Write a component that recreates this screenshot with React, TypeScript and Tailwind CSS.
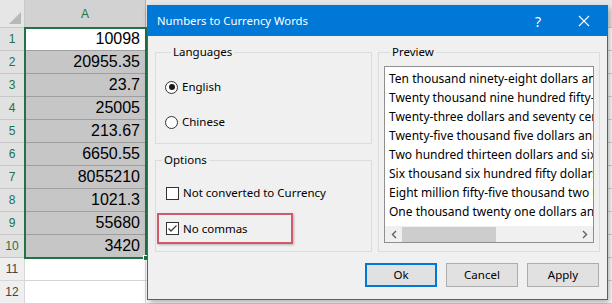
import React from 'react';

const values = ['10098', '20955.35', '23.7', '25005', '213.67', '6650.55', '8055210', '1021.3', '55680', '3420'];

const previewLines = [
  'Ten thousand ninety-eight dollars and',
  'Twenty thousand nine hundred fifty-five',
  'Twenty-three dollars and seventy cents',
  'Twenty-five thousand five dollars and',
  'Two hundred thirteen dollars and sixty',
  'Six thousand six hundred fifty dollars and',
  'Eight million fifty-five thousand two hundred',
  'One thousand twenty one dollars and',
];

function Radio({ checked, label }: { checked?: boolean; label: string }) {
  return (
    <div className="flex items-center gap-[4px] h-[16px]">
      <span className="w-[13px] h-[13px] rounded-full border border-[#333333] bg-white flex items-center justify-center">
        {checked && <span className="w-[6px] h-[6px] rounded-full bg-[#1a1a1a]" />}
      </span>
      <span>{label}</span>
    </div>
  );
}

function Check({ checked, label }: { checked?: boolean; label: string }) {
  return (
    <div className="flex items-center gap-[4px] h-[16px] whitespace-nowrap">
      <span className="w-[13px] h-[13px] shrink-0 border border-[#333333] bg-white flex items-center justify-center">
        {checked && (
          <svg width="11" height="11" viewBox="0 0 11 11">
            <polyline points="1.5,5.5 4,8 9.5,2.5" fill="none" stroke="#3c3c3c" strokeWidth="1.3" />
          </svg>
        )}
      </span>
      <span>{label}</span>
    </div>
  );
}

export default function App() {
  return (
    <div className="relative w-[612px] h-[304px] overflow-hidden bg-white font-['Liberation_Sans',sans-serif]">
      {/* Spreadsheet */}
      <div className="flex flex-col">
        <div className="flex h-[28px]">
          <div className="relative w-[25px] bg-[#e6e6e6] border-r border-b border-[#c8c8c8]">
            <svg className="absolute right-[3px] bottom-[3px]" width="12" height="12" viewBox="0 0 12 12">
              <polygon points="12,0 12,12 0,12" fill="#b8b8b8" />
            </svg>
          </div>
          <div className="w-[121px] bg-[#d2d2d2] border-r border-[#b0b0b0] flex items-center justify-center text-[12px] text-[#217346]">
            A
          </div>
          <div className="flex-1 bg-[#e6e6e6] border-b border-[#c8c8c8]" />
        </div>
        {Array.from({ length: 12 }).map((_, i) => {
          const sel = i < 10;
          return (
            <div key={i} className="flex h-[23px]">
              <div
                className={`w-[25px] border-r border-b flex items-center justify-center text-[12px] ${
                  sel ? 'bg-[#e1e1e1] border-[#c8c8c8] text-[#217346]' : 'bg-[#efefef] border-[#d8d8d8] text-[#444444]'
                }`}
              >
                {i + 1}
              </div>
              <div
                className={`w-[121px] border-b border-r flex items-center justify-end pr-[5px] text-[16px] text-black ${
                  i === 0 ? 'bg-white border-[#a0a0a0]' : sel ? 'bg-[#c6c6c6] border-[#9e9e9e]' : 'bg-white border-[#d4d4d4]'
                }`}
              >
                {sel ? values[i] : ''}
              </div>
              <div className="flex-1 border-b border-[#d4d4d4]" />
            </div>
          );
        })}
      </div>

      {/* Selection outline */}
      <div className="absolute left-[24px] top-[27px] w-[123px] h-[232px] border-2 border-[#217346]" />
      <div className="absolute left-[143px] top-[255px] w-[6px] h-[6px] bg-[#217346] border border-white" />

      {/* Dialog */}
      <div className="absolute left-[147px] top-[5px] w-[461px] h-[295px] border border-[#0078d7] bg-[#f0f0f0] shadow-[2px_3px_6px_rgba(0,0,0,0.3)] flex flex-col font-['Noto_Sans',sans-serif] text-[11.5px] text-black">
        <div className="h-[30px] shrink-0 bg-[#0078d7] flex items-center pl-[9px] text-white text-[11.3px]">
          <span className="flex-1">Numbers to Currency Words</span>
          <span className="w-[46px] text-center text-[14px]">?</span>
          <span className="w-[46px] flex justify-center">
            <svg width="12" height="12" viewBox="0 0 12 12">
              <path d="M1 1L11 11M11 1L1 11" stroke="white" strokeWidth="1.2" />
            </svg>
          </span>
        </div>

        <div className="flex gap-[6px] pt-[8px] pl-[7px] pr-[6px]">
          <div className="w-[217px] shrink-0 flex flex-col gap-[8px]">
            <fieldset className="min-w-0 h-[100px] border border-[#dcdcdc] pl-[9px]">
              <legend className="ml-[6px] px-[2px] leading-[16px]">Languages</legend>
              <div className="flex flex-col gap-[19px] pt-[19px]">
                <Radio checked label="English" />
                <Radio label="Chinese" />
              </div>
            </fieldset>
            <fieldset className="min-w-0 h-[100px] border border-[#dcdcdc]">
              <legend className="ml-[6px] px-[2px] leading-[16px]">Options</legend>
              <div className="flex flex-col pt-[17px]">
                <div className="pl-[10px]">
                  <Check label="Not converted to Currency" />
                </div>
                <div className="mt-[12px] ml-[1px] w-[136px] h-[31px] border-2 border-[#d0596a] shadow-[1px_1px_2px_rgba(0,0,0,0.25)] pl-[7px] flex items-center">
                  <Check checked label="No commas" />
                </div>
              </div>
            </fieldset>
          </div>

          <fieldset className="min-w-0 w-[222px] shrink-0 h-[208px] border border-[#dcdcdc] px-[5px]">
            <legend className="ml-[6px] px-[2px] leading-[16px]">Preview</legend>
            <div className="mt-[6px] h-[177px] border border-[#8f8f8f] bg-white flex flex-col">
              <div className="flex-1 overflow-hidden pt-[2px] pl-[4px] text-[12px]">
                {previewLines.map((l) => (
                  <div key={l} className="h-[19px] leading-[19px] whitespace-nowrap">
                    {l}
                  </div>
                ))}
              </div>
              <div className="h-[16px] bg-[#f0f0f0] flex items-center">
                <span className="w-[17px] flex justify-center">
                  <svg width="6" height="9" viewBox="0 0 6 9">
                    <path d="M5 1L1.5 4.5L5 8" fill="none" stroke="#606060" strokeWidth="1.4" />
                  </svg>
                </span>
                <div className="w-[94px] h-[15px] bg-[#cdcdcd]" />
                <div className="flex-1" />
                <span className="w-[17px] flex justify-center">
                  <svg width="6" height="9" viewBox="0 0 6 9">
                    <path d="M1 1L4.5 4.5L1 8" fill="none" stroke="#606060" strokeWidth="1.4" />
                  </svg>
                </span>
              </div>
            </div>
          </fieldset>
        </div>

        <div className="flex justify-end gap-[9px] pr-[8px] pt-[11px]">
          <button className="w-[72px] h-[24px] border-2 border-[#0078d7] bg-[#e1e1e1]">Ok</button>
          <button className="w-[72px] h-[24px] border border-[#adadad] bg-[#e1e1e1]">Cancel</button>
          <button className="w-[72px] h-[24px] border border-[#adadad] bg-[#e1e1e1]">Apply</button>
        </div>
      </div>
    </div>
  );
}
